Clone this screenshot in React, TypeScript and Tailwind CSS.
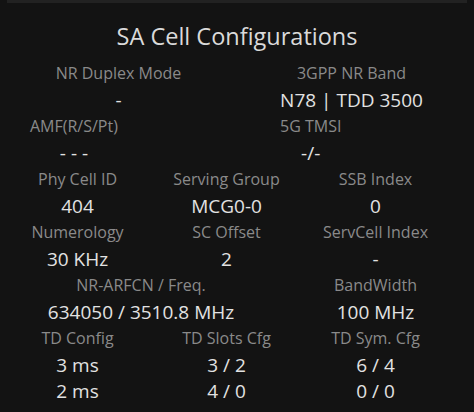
import React from "react"

type Cell = { label: string; values: string[] }

const row3: Cell[] = [
  { label: "Phy Cell ID", values: ["404"] },
  { label: "Serving Group", values: ["MCG0-0"] },
  { label: "SSB Index", values: ["0"] },
]

const row4: Cell[] = [
  { label: "Numerology", values: ["30 KHz"] },
  { label: "SC Offset", values: ["2"] },
  { label: "ServCell Index", values: ["-"] },
]

const row6: Cell[] = [
  { label: "TD Config", values: ["3 ms", "2 ms"] },
  { label: "TD Slots Cfg", values: ["3 / 2", "4 / 0"] },
  { label: "TD Sym. Cfg", values: ["6 / 4", "0 / 0"] },
]

function Item({ label, values, className = "" }: Cell & { className?: string }) {
  return (
    <div className={"flex flex-col items-center " + className}>
      <div className="text-[16px] leading-[26.5px] text-[#8a8a8a] whitespace-nowrap">{label}</div>
      {values.map((v, i) => (
        <div key={i} className="text-[19px] leading-[26.5px] text-[#e2e2e2] whitespace-pre">
          {v}
        </div>
      ))}
    </div>
  )
}

export default function App() {
  return (
    <div
      className="w-[474px] h-[412px] overflow-hidden bg-[#131313]"
      style={{ fontFamily: "'Open Sans', 'Noto Sans', sans-serif" }}
    >
      <div className="mx-[7px] h-[3px] bg-[#222222]" />

      <h1 className="pt-[17px] pb-[8px] text-center text-[23.5px] leading-[32px] text-[#dadada]">
        SA Cell Configurations
      </h1>

      {/* NR mode / band */}
      <div className="grid grid-cols-[237px_229px]">
        <Item label="NR Duplex Mode" values={["-"]} />
        <Item label="3GPP NR Band" values={["N78 | TDD 3500"]} />
      </div>

      {/* AMF / TMSI */}
      <div className="grid grid-cols-[250px_1fr] pl-[30px]">
        <Item label="AMF(R/S/Pt)" values={["- - -"]} className="w-fit" />
        <Item label="5G TMSI" values={["-/-"]} className="w-fit" />
      </div>

      <div className="grid grid-cols-3 w-[450px] pl-[3px]">
        {row3.map((c) => (
          <Item key={c.label} {...c} />
        ))}
        {row4.map((c) => (
          <Item key={c.label} {...c} />
        ))}
        <Item label="NR-ARFCN / Freq." values={["634050 / 3510.8 MHz"]} className="col-span-2 pr-[22px]" />
        <Item label="BandWidth" values={["100 MHz"]} />
        {row6.map((c) => (
          <Item key={c.label} {...c} />
        ))}
      </div>
    </div>
  )
}
